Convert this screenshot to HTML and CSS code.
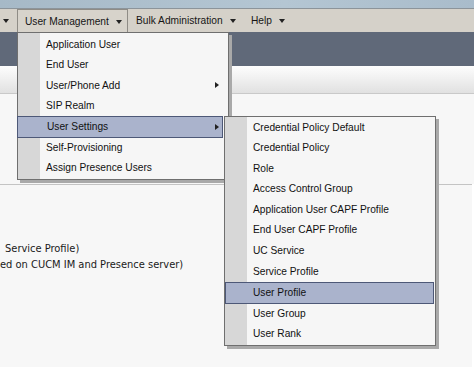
FILE: index.html
```html
<!DOCTYPE html>
<html>
<head>
<meta charset="utf-8">
<link rel="stylesheet" href="styles.css">
</head>
<body>
<div class="page">
  <div class="topstrip"></div>
  <div class="menubar">
    <div class="mitem first"><span class="caret"></span></div>
    <div class="mitem active"><span class="mlabel">User Management</span><span class="caret"></span></div>
    <div class="mitem"><span class="mlabel">Bulk Administration</span><span class="caret"></span></div>
    <div class="mitem"><span class="mlabel">Help</span><span class="caret"></span></div>
  </div>
  <div class="darkband"></div>
  <div class="gradband"></div>
  <div class="content">
    <div class="rule"></div>
    <div class="lines">
      <div class="line l1">Service Profile)</div>
      <div class="line l2">ed on CUCM IM and Presence server)</div>
    </div>
  </div>

  <div class="menu menu1">
    <div class="row">Application User</div>
    <div class="row">End User</div>
    <div class="row sub">User/Phone Add<span class="rarrow"></span></div>
    <div class="row">SIP Realm</div>
    <div class="row sub hl">User Settings<span class="rarrow"></span></div>
    <div class="row">Self-Provisioning</div>
    <div class="row">Assign Presence Users</div>
  </div>

  <div class="menu menu2">
    <div class="row">Credential Policy Default</div>
    <div class="row">Credential Policy</div>
    <div class="row">Role</div>
    <div class="row">Access Control Group</div>
    <div class="row">Application User CAPF Profile</div>
    <div class="row">End User CAPF Profile</div>
    <div class="row">UC Service</div>
    <div class="row">Service Profile</div>
    <div class="row hl">User Profile</div>
    <div class="row">User Group</div>
    <div class="row">User Rank</div>
  </div>
</div>
</body>
</html>
```
FILE: styles.css
```css
html, body {
  margin: 0;
  padding: 0;
  background: #ffffff;
}
.page {
  position: relative;
  width: 474px;
  height: 367px;
  overflow: hidden;
  font-family: "Liberation Sans", Arial, sans-serif;
  font-size: 10.2px;
  color: #111;
  background: #f7f7f7;
}
.topstrip {
  height: 9px;
  background: linear-gradient(to right, #a6b9c7, #b4c6d3 60%, #a9bccb);
  border-bottom: 1px solid #8c949a;
  box-sizing: border-box;
}
.menubar {
  display: flex;
  height: 23px;
  background: #d5d1c9;
  box-sizing: border-box;
}
.mitem {
  display: flex;
  align-items: center;
  padding: 0 8px 0 8px;
  gap: 7px;
  box-sizing: border-box;
}
.mitem.first {
  width: 17px;
  padding: 0;
  justify-content: flex-start;
  padding-left: 3px;
}
.mitem.active {
  width: 111px;
  padding-left: 7px;
  border: 1px solid #8f8c86;
  border-bottom: none;
  background: #d7d3cb;
}
.mitem:nth-child(3) {
  width: 115px;
}
.mlabel {
  white-space: nowrap;
  color: #151515;
}
.caret {
  width: 0;
  height: 0;
  border-left: 3.5px solid transparent;
  border-right: 3.5px solid transparent;
  border-top: 4px solid #222;
  margin-top: 1px;
}
.darkband {
  height: 34px;
  background: #606979;
}
.gradband {
  height: 27px;
  background: linear-gradient(to bottom, #fdfdfd, #f2f2f2 40%, #e1e1e1);
  border-bottom: 1px solid #c9c9c9;
}
.content {
  position: relative;
  height: 300px;
  background: #f7f7f7;
  border-right: 2px solid #ffffff;
}
.rule {
  margin-top: 90px;
  height: 1px;
  background: #c4c4c4;
}
.lines {
  margin-top: 56px;
  font-family: "DejaVu Sans", Verdana, sans-serif;
  font-size: 11px;
  font-stretch: condensed;
  letter-spacing: 0;
  color: #1a1a1a;
}
.line {
  height: 16px;
  line-height: 16px;
  white-space: nowrap;
}
.l1 { padding-left: 5px; }
.l2 { padding-left: 0; }

.menu {
  position: absolute;
  background: #f6f6f6;
  border: 1px solid #6f6f6f;
  box-shadow: 3px 3px 0 #a9a9a9;
  box-sizing: border-box;
  background-image: linear-gradient(to right, #d7d7d7, #d7d7d7);
  background-repeat: no-repeat;
  background-size: 22px 100%;
}
.menu1 {
  left: 17px;
  top: 32px;
  width: 212px;
  height: 148px;
  padding-top: 1.5px;
}
.menu2 {
  left: 224px;
  top: 116px;
  width: 212px;
  height: 230px;
  padding-top: 0.5px;
}
.row {
  position: relative;
  height: 20.6px;
  line-height: 20.6px;
  padding-left: 28px;
  white-space: nowrap;
  box-sizing: border-box;
}
.row.hl {
  background: #aab3cc;
  border: 1px solid #4d5877;
  line-height: 19px;
  height: 21.5px;
  padding-left: 28px;
}
.menu1 .row.hl {
  margin-left: -1px;
  margin-right: 5px;
  margin-top: -0.5px;
  padding-left: 29px;
}
.menu2 .row.hl {
  margin-left: 0;
  margin-right: 1px;
  padding-left: 27px;
}
.rarrow {
  position: absolute;
  right: 9px;
  top: 50%;
  margin-top: -3.5px;
  width: 0;
  height: 0;
  border-top: 3.5px solid transparent;
  border-bottom: 3.5px solid transparent;
  border-left: 4px solid #222;
}
.row.hl .rarrow {
  right: 3px;
}
```
